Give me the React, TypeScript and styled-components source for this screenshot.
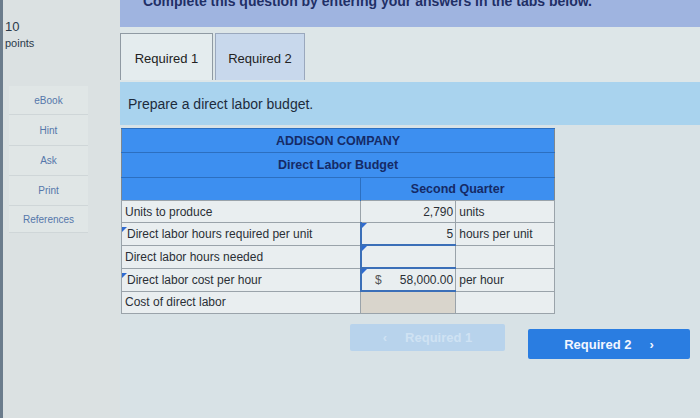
import styled, { createGlobalStyle } from 'styled-components';

const GlobalStyle = createGlobalStyle`
    html, body {
        margin: 0;
        padding: 0;
        background: #d6dfe4;
        font-family: 'Liberation Sans', Arial, sans-serif;
    }
`;

const Page = styled.div`
    width: 700px;
    height: 418px;
    overflow: hidden;
    display: grid;
    grid-template-columns: 117px 1fr;
    border-left: 3px solid #6b7c8c;
    box-sizing: border-box;
`;

const Side = styled.div`
    background: #dbe1e2;
    padding: 19px 0 0 2px;
`;

const Points = styled.div`
    font-size: 13px;
    line-height: 15px;
    color: #2b3a4a;
    & > span {
        display: block;
        font-size: 11px;
        margin-top: 2px;
    }
`;

const Tools = styled.div`
    margin: 35px 0 0 4px;
    width: 79px;
    display: flex;
    flex-direction: column;
`;

const Tool = styled.div<{ h: number }>`
    height: ${({ h }) => h}px;
    display: flex;
    align-items: center;
    justify-content: center;
    font-size: 10px;
    color: #5577aa;
    background: #e0e6e6;
    border-bottom: 1px solid #cfd6d8;
`;

const Main = styled.div`
    display: flex;
    flex-direction: column;
    background: #d8e2e6;
`;

const Banner = styled.div`
    height: 27px;
    background: #9fb4e0;
    overflow: hidden;
    display: flex;
    justify-content: flex-end;
    padding-right: 108px;
    & > span {
        margin-top: -7px;
        font-size: 14px;
        font-weight: bold;
        color: #1f2f66;
        line-height: 16px;
    }
`;

const TabsRow = styled.div`
    height: 55px;
    background: #dde6e8;
    display: flex;
    align-items: flex-end;
    gap: 2px;
    padding-bottom: 2px;
    box-sizing: border-box;
`;

const Tab = styled.div<{ active?: boolean }>`
    width: ${({ active }) => (active ? 93 : 90)}px;
    height: 47px;
    box-sizing: border-box;
    display: flex;
    align-items: center;
    justify-content: center;
    font-size: 13px;
    color: #222;
    background: ${({ active }) => (active ? '#e4ecee' : '#c8d8ec')};
    border: 1px solid ${({ active }) => (active ? '#8f9aa3' : '#9aa8bd')};
    border-bottom: none;
    padding-top: 2px;
`;

const Instruction = styled.div`
    height: 43px;
    background: #a9d3ee;
    display: flex;
    align-items: center;
    padding-left: 8px;
    font-size: 14px;
    color: #1d2b3c;
`;

const Table = styled.table`
    margin: 3px 0 0 1px;
    width: 434px;
    border-collapse: collapse;
    font-size: 12px;
    color: #2a2f36;
    background: #e9eef0;
    border: 1px solid #7d8790;
`;

const HeadCell = styled.td<{ h: number }>`
    height: ${({ h }) => h}px;
    padding: 0;
    background: #3d8ff0;
    border-top: 1px solid #2c6fc0;
    color: #152a66;
    font-weight: bold;
    font-size: 12.5px;
    text-align: center;
`;

const Cell = styled.td<{ align?: string; input?: boolean; shade?: boolean }>`
    height: 21px;
    padding: 0 2px 0 3px;
    text-align: ${({ align }) => align || 'left'};
    border: 1px solid #9aa3aa;
    background: ${({ shade }) => (shade ? '#d9d5cc' : 'transparent')};
    white-space: nowrap;
    position: relative;
    ${({ input }) =>
        input &&
        `
        border-left: 2px solid #3b6fb8;
        border-bottom: 2px solid #3b6fb8;
        &::before {
            content: '';
            position: absolute;
            left: 0;
            top: 0;
            border-top: 5px solid #2f6bd0;
            border-right: 5px solid transparent;
        }
    `}
`;

const Marked = styled.span`
    &::before {
        content: '';
        display: inline-block;
        vertical-align: top;
        margin-left: -3px;
        border-top: 5px solid #2f6bd0;
        border-right: 5px solid transparent;
    }
`;

const Money = styled.div`
    display: flex;
    justify-content: space-between;
    padding-left: 10px;
    & > span:first-child {
        color: #555;
    }
`;

const Nav = styled.div`
    display: flex;
    gap: 23px;
    margin: 10px 0 0 230px;
    align-items: flex-start;
`;

const NavBtn = styled.button<{ disabled?: boolean }>`
    width: ${({ disabled }) => (disabled ? 155 : 162)}px;
    height: ${({ disabled }) => (disabled ? 27 : 30)}px;
    margin-top: ${({ disabled }) => (disabled ? 0 : 5)}px;
    border: none;
    border-radius: 2px;
    font-family: 'Liberation Sans', Arial, sans-serif;
    font-size: 13px;
    font-weight: bold;
    color: ${({ disabled }) => (disabled ? '#cfe2f3' : '#f2f6ff')};
    background: ${({ disabled }) => (disabled ? '#b8d3ec' : '#2a7de1')};
    display: flex;
    align-items: center;
    justify-content: center;
    gap: 18px;
    cursor: pointer;
`;

export default function App() {
    return (
        <Page>
            <GlobalStyle />
            <Side>
                <Points>
                    10
                    <span>points</span>
                </Points>
                <Tools>
                    <Tool h={28}>eBook</Tool>
                    <Tool h={30}>Hint</Tool>
                    <Tool h={29}>Ask</Tool>
                    <Tool h={29}>Print</Tool>
                    <Tool h={26}>References</Tool>
                </Tools>
            </Side>
            <Main>
                <Banner>
                    <span>Complete this question by entering your answers in the tabs below.</span>
                </Banner>
                <TabsRow>
                    <Tab active>Required 1</Tab>
                    <Tab>Required 2</Tab>
                </TabsRow>
                <Instruction>Prepare a direct labor budget.</Instruction>
                <Table>
                    <colgroup>
                        <col style={{ width: 240 }} />
                        <col style={{ width: 95 }} />
                        <col style={{ width: 99 }} />
                    </colgroup>
                    <tbody>
                        <tr>
                            <HeadCell h={23} colSpan={3}>ADDISON COMPANY</HeadCell>
                        </tr>
                        <tr>
                            <HeadCell h={24} colSpan={3}>Direct Labor Budget</HeadCell>
                        </tr>
                        <tr>
                            <HeadCell h={22} />
                            <HeadCell h={22} colSpan={2} style={{ borderLeft: '1px solid #2c6fc0' }}>
                                Second Quarter
                            </HeadCell>
                        </tr>
                        <tr>
                            <Cell>Units to produce</Cell>
                            <Cell align="right">2,790</Cell>
                            <Cell>units</Cell>
                        </tr>
                        <tr>
                            <Cell>
                                <Marked>Direct labor hours required per unit</Marked>
                            </Cell>
                            <Cell align="right" input>5</Cell>
                            <Cell>hours per unit</Cell>
                        </tr>
                        <tr>
                            <Cell>Direct labor hours needed</Cell>
                            <Cell input />
                            <Cell />
                        </tr>
                        <tr>
                            <Cell>
                                <Marked>Direct labor cost per hour</Marked>
                            </Cell>
                            <Cell input>
                                <Money>
                                    <span>$</span>
                                    <span>58,000.00</span>
                                </Money>
                            </Cell>
                            <Cell>per hour</Cell>
                        </tr>
                        <tr>
                            <Cell>Cost of direct labor</Cell>
                            <Cell shade />
                            <Cell />
                        </tr>
                    </tbody>
                </Table>
                <Nav>
                    <NavBtn disabled>
                        <span>‹</span>
                        <span>Required 1</span>
                    </NavBtn>
                    <NavBtn>
                        <span>Required 2</span>
                        <span>›</span>
                    </NavBtn>
                </Nav>
            </Main>
        </Page>
    );
}
